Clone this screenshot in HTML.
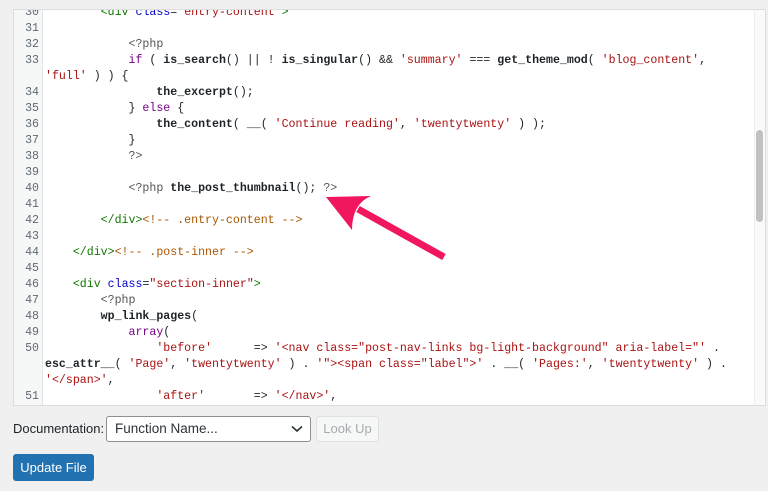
<!DOCTYPE html>
<html><head><meta charset="utf-8"><style>
*{margin:0;padding:0;box-sizing:border-box}
body{width:768px;height:491px;background:#f0f0f1;position:relative;overflow:hidden;font-family:"Liberation Sans",sans-serif}
#ed{position:absolute;left:13px;top:9px;width:753px;height:397px;background:#fff;border:1px solid #dcdcde;overflow:hidden}
#gut{position:absolute;left:0;top:0;width:29px;height:100%;background:#f6f7f7;border-right:1px solid #e2e4e7}
.r{position:absolute;left:0;height:16px;line-height:16px;font-family:"Liberation Mono",monospace;font-size:11.6px;white-space:pre;color:#1d2327}
.n{width:25px;text-align:right;color:#606a73;font-weight:normal}
.c{left:31px}
.k{color:#708}.s{color:#a11}.t{color:#170}.a{color:#00c}.m{color:#a50}.p{color:#555}.b{font-weight:bold}
#sb{position:absolute;left:740px;top:0;width:12px;height:100%;background:#fafafa;border-left:1px solid #eee}
#th{position:absolute;left:742px;top:120px;width:7px;height:92px;background:#c1c1c1;border-radius:4px}
</style></head><body>
<div id="ed">
<div id="gut"></div>
<div id="sb"></div><div id="th"></div>
<div class="r n" style="top:-5px">30</div><div class="r c" style="top:-5px">        <span class="t">&lt;div</span> <span class="a">class</span>=<span class="s">"entry-content"</span><span class="t">&gt;</span></div>
<div class="r n" style="top:11px">31</div>
<div class="r n" style="top:27px">32</div><div class="r c p" style="top:27px">            &lt;?php</div>
<div class="r n" style="top:43px">33</div><div class="r c" style="top:43px">            <span class="k">if</span> ( <span class="b">is_search</span>() || ! <span class="b">is_singular</span>() &amp;&amp; <span class="s">'summary'</span> === <span class="b">get_theme_mod</span>( <span class="s">'blog_content'</span>,</div>
<div class="r c" style="top:59px"><span class="s">'full'</span> ) ) {</div>
<div class="r n" style="top:75px">34</div><div class="r c" style="top:75px">                <span class="b">the_excerpt</span>();</div>
<div class="r n" style="top:91px">35</div><div class="r c" style="top:91px">            } <span class="k">else</span> {</div>
<div class="r n" style="top:107px">36</div><div class="r c" style="top:107px">                <span class="b">the_content</span>( <span class="b">__</span>( <span class="s">'Continue reading'</span>, <span class="s">'twentytwenty'</span> ) );</div>
<div class="r n" style="top:123px">37</div><div class="r c" style="top:123px">            }</div>
<div class="r n" style="top:139px">38</div><div class="r c p" style="top:139px">            ?&gt;</div>
<div class="r n" style="top:155px">39</div>
<div class="r n" style="top:171px">40</div><div class="r c" style="top:171px">            <span class="p">&lt;?php</span> <span class="b">the_post_thumbnail</span>(); <span class="p">?&gt;</span></div>
<div class="r n" style="top:187px">41</div>
<div class="r n" style="top:203px">42</div><div class="r c" style="top:203px">        <span class="t">&lt;/div&gt;</span><span class="m">&lt;!-- .entry-content --&gt;</span></div>
<div class="r n" style="top:219px">43</div>
<div class="r n" style="top:235px">44</div><div class="r c" style="top:235px">    <span class="t">&lt;/div&gt;</span><span class="m">&lt;!-- .post-inner --&gt;</span></div>
<div class="r n" style="top:251px">45</div>
<div class="r n" style="top:267px">46</div><div class="r c" style="top:267px">    <span class="t">&lt;div</span> <span class="a">class</span>=<span class="s">"section-inner"</span><span class="t">&gt;</span></div>
<div class="r n" style="top:283px">47</div><div class="r c p" style="top:283px">        &lt;?php</div>
<div class="r n" style="top:299px">48</div><div class="r c" style="top:299px">        <span class="b">wp_link_pages</span>(</div>
<div class="r n" style="top:315px">49</div><div class="r c" style="top:315px">            <span class="k">array</span>(</div>
<div class="r n" style="top:331px">50</div><div class="r c" style="top:331px">                <span class="s">'before'</span>      =&gt; <span class="s">'&lt;nav class="post-nav-links bg-light-background" aria-label="'</span> .</div>
<div class="r c" style="top:347px"><span class="b">esc_attr__</span>( <span class="s">'Page'</span>, <span class="s">'twentytwenty'</span> ) . <span class="s">'"&gt;&lt;span class="label"&gt;'</span> . <span class="b">__</span>( <span class="s">'Pages:'</span>, <span class="s">'twentytwenty'</span> ) .</div>
<div class="r c" style="top:363px"><span class="s">'&lt;/span&gt;'</span>,</div>
<div class="r n" style="top:379px">51</div><div class="r c" style="top:379px">                <span class="s">'after'</span>       =&gt; <span class="s">'&lt;/nav&gt;'</span>,</div>
<div class="r n" style="top:395px">52</div><div class="r c" style="top:395px">                <span class="s">'link_before'</span> =&gt; <span class="s">'&lt;span class="page-number"&gt;'</span>,</div>
</div>
<svg style="position:absolute;left:0;top:0" width="768" height="491"><path d="M444 257 L358 209" stroke="#f0175f" stroke-width="7" stroke-linecap="butt"/><path d="M326 197 L371 196 Q352 204 352 230 Z" fill="#f0175f"/></svg>
<div style="position:absolute;left:13px;top:421px;font-size:13px;color:#1d2327">Documentation:</div>
<div style="position:absolute;left:106px;top:416px;width:205px;height:26px;border:1px solid #8c8f94;border-radius:3px;background:#fff;font-size:13.5px;line-height:24px;padding-left:8px;color:#2c3338">Function Name...<svg style="position:absolute;right:7px;top:8px" width="12" height="8"><path d="M1 1.5 L6 6 L11 1.5" stroke="#2c3338" stroke-width="1.6" fill="none"/></svg></div>
<div style="position:absolute;left:316px;top:416px;width:63px;height:26px;border:1px solid #e0e0e0;border-radius:3px;background:#f6f7f7;font-size:13px;line-height:24px;text-align:center;color:#a7aaad">Look Up</div>
<div style="position:absolute;left:13px;top:454px;width:81px;height:27px;border-radius:3px;background:#2271b1;font-size:13px;line-height:27px;text-align:center;color:#fff">Update File</div>
</body></html>
